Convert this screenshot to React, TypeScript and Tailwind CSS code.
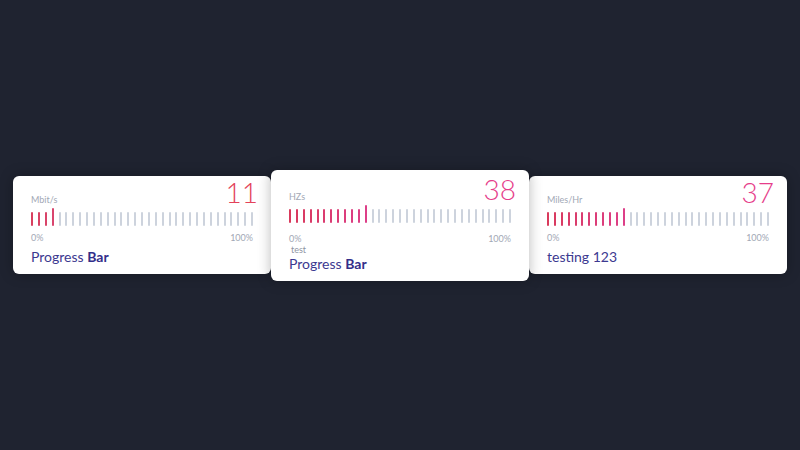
import React from "react";

type Meter = {
  unit: string;
  value: number;
  filled: number;
  valueColor: string;
  from: string;
  to: string;
  note?: string;
  title: React.ReactNode;
  raised?: boolean;
};

const TICKS = 33;

function mix(a: string, b: string, t: number) {
  const pa = [1, 3, 5].map((i) => parseInt(a.slice(i, i + 2), 16));
  const pb = [1, 3, 5].map((i) => parseInt(b.slice(i, i + 2), 16));
  const c = pa.map((v, i) => Math.round(v + (pb[i] - v) * t));
  return `rgb(${c[0]}, ${c[1]}, ${c[2]})`;
}

function Ticks({ filled, from, to }: { filled: number; from: string; to: string }) {
  return (
    <div className="flex h-[18px] items-end justify-between">
      {Array.from({ length: TICKS }).map((_, i) => {
        const on = i < filled;
        const last = i === filled - 1;
        return (
          <div
            key={i}
            className={`w-[2px] rounded-[1px] ${last ? "h-[18px]" : "h-[14px]"} ${on ? "" : "bg-[#cdd3dd]"}`}
            style={on ? { backgroundColor: mix(from, to, filled > 1 ? i / (filled - 1) : 0) } : undefined}
          />
        );
      })}
    </div>
  );
}

function Card({ m }: { m: Meter }) {
  return (
    <div
      className={`relative w-[258px] rounded-[6px] bg-white px-[18px] shadow-[0_0_14px_rgba(0,0,0,0.28)] ${
        m.raised ? "z-10 pb-[9px] pt-[4px]" : "z-0 pb-[7px] pt-[1px]"
      }`}
    >
      <div className="flex items-end justify-between">
        <span className="mb-[2px] text-[9px] leading-[12px] text-[#a2a8b5]">{m.unit}</span>
        <span
          className="-mr-[5px] text-[28px] font-light leading-[31px]"
          style={{ color: m.valueColor }}
        >
          {m.value}
        </span>
      </div>
      <Ticks filled={m.filled} from={m.from} to={m.to} />
      <div
        className={`${
          m.note ? "mt-[10px] leading-[11px]" : "mt-[6px] leading-[12px]"
        } flex justify-between text-[9px] text-[#a2a8b5]`}
      >
        <span>0%</span>
        <span>100%</span>
      </div>
      {m.note && (
        <div className="pl-[2px] text-[9px] leading-[11px] text-[#8f95a3]">{m.note}</div>
      )}
      <div
        className={`${m.note ? "leading-[17px]" : "mt-[3px] leading-[20px]"} text-[14px] text-[#3c3990]`}
      >
        {m.title}
      </div>
    </div>
  );
}

const meters: Meter[] = [
  {
    unit: "Mbit/s",
    value: 11,
    filled: 4,
    valueColor: "#e3425a",
    from: "#d9405f",
    to: "#d9456e",
    title: (
      <>
        Progress <b className="font-bold text-[#332e8a]">Bar</b>
      </>
    ),
  },
  {
    unit: "HZs",
    value: 38,
    filled: 12,
    valueColor: "#e63d8a",
    from: "#d93a5c",
    to: "#dd3f88",
    note: "test",
    raised: true,
    title: (
      <>
        Progress <b className="font-bold text-[#332e8a]">Bar</b>
      </>
    ),
  },
  {
    unit: "Miles/Hr",
    value: 37,
    filled: 12,
    valueColor: "#e63d8a",
    from: "#d93a5c",
    to: "#dd3f88",
    title: <>testing 123</>,
  },
];

export default function App() {
  return (
    <div
      className="flex h-[450px] w-full items-center justify-center bg-[#1f2330]"
      style={{ fontFamily: "Lato, 'Open Sans', sans-serif" }}
    >
      <div className="flex items-center">
        {meters.map((m, i) => (
          <Card key={i} m={m} />
        ))}
      </div>
    </div>
  );
}
